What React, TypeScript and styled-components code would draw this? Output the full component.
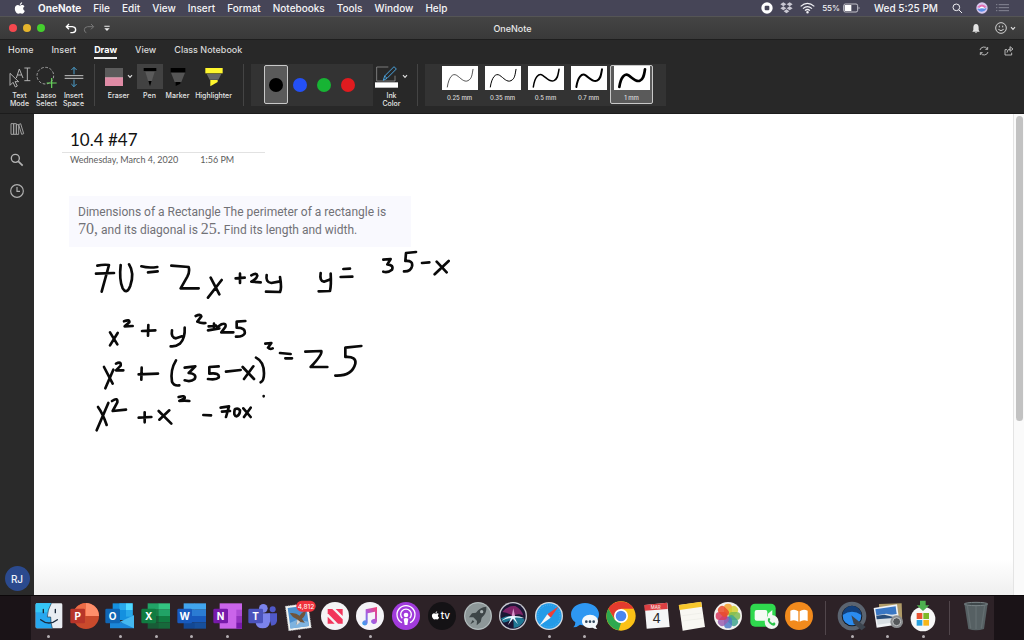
import React from "react";
import styled, { createGlobalStyle, css } from "styled-components";

const Global = createGlobalStyle`
  * { box-sizing: border-box; }
  body { margin: 0; background: #181216; font-family: Inter, "Liberation Sans", sans-serif; }
  button { font: inherit; color: inherit; background: none; border: 0; padding: 0; margin: 0; }
  svg { display: block; flex: none; }
`;

const Screen = styled.div`
  display: flex;
  flex-direction: column;
  min-height: 100vh;
`;

/* ---------- system menu bar ---------- */
const MenuBar = styled.header`
  display: flex;
  align-items: center;
  justify-content: space-between;
  height: 16px;
  padding: 0 15px 0 14px;
  background: #464557;
  color: #f4f4f6;
  font-size: 10px;
  font-weight: 500;
`;
const Menus = styled.nav`
  display: flex;
  align-items: center;
  gap: 12px;
`;
const MenuItem = styled.button<{ $bold?: boolean }>`
  line-height: 16px;
  font-weight: ${(p) => (p.$bold ? 700 : 500)};
`;
const Status = styled.div<{ $gap: number }>`
  display: flex;
  align-items: center;
  gap: ${(p) => p.$gap}px;
`;
const Percent = styled.span`
  font-size: 8px;
`;

/* ---------- window chrome ---------- */
const TitleBar = styled.div`
  display: grid;
  grid-template-columns: 1fr auto 1fr;
  align-items: center;
  height: 24px;
  padding: 0 8px 0 9px;
  background: linear-gradient(#444, #393939);
  border-top: 1px solid #555;
  border-bottom: 1px solid #1e1e1e;
  color: #e8e8e8;
`;
const TitleText = styled.span`
  font-size: 9px;
  font-weight: 500;
`;
const Cluster = styled.div<{ $gap: number; $end?: boolean }>`
  display: flex;
  align-items: center;
  gap: ${(p) => p.$gap}px;
  justify-content: ${(p) => (p.$end ? "flex-end" : "flex-start")};
`;
const Light = styled.button<{ $color: string }>`
  width: 8px;
  height: 8px;
  border-radius: 50%;
  background: ${(p) => p.$color};
`;
const Ribbon = styled.section`
  background: #282828;
  color: #e0e0e0;
  height: 74px;
  border-bottom: 1px solid #1c1c1c;
`;
const TabRow = styled.div`
  display: flex;
  justify-content: space-between;
  align-items: center;
  height: 24px;
  padding: 0 10px 2px 8px;
`;
const Tab = styled.button<{ $active?: boolean }>`
  font-size: 9px;
  line-height: 14px;
  font-weight: ${(p) => (p.$active ? 700 : 500)};
  color: ${(p) => (p.$active ? "#fff" : "#d8d8d8")};
  border-bottom: 2px solid ${(p) => (p.$active ? "#eee" : "transparent")};
`;
const Tools = styled.div`
  display: flex;
  align-items: flex-start;
  padding-left: 6px;
`;
const ToolButton = styled.button<{ $width: number }>`
  display: flex;
  flex-direction: column;
  align-items: center;
  width: ${(p) => p.$width}px;
  font-size: 7px;
  line-height: 8px;
  font-weight: 500;
  color: #e6e6e6;
  text-align: center;
`;
const ToolIcon = styled.span<{ $on?: boolean }>`
  display: flex;
  align-items: center;
  justify-content: center;
  gap: 4px;
  min-width: 26px;
  height: 25px;
  margin-bottom: 3px;
  background: ${(p) => (p.$on ? "#424242" : "transparent")};
`;
const Divider = styled.span`
  width: 1px;
  height: 42px;
  margin: 0 7px;
  background: #444;
`;
const Panel = styled.div`
  display: flex;
  height: 42px;
  padding: 1px 13px;
  background: #333;
`;
const picked = css`
  background: #5a5a5a;
  border-color: #c8c8c8;
`;
const Swatch = styled.button<{ $on?: boolean }>`
  display: flex;
  align-items: center;
  justify-content: center;
  width: 24px;
  height: 39px;
  border: 1px solid transparent;
  border-radius: 2px;
  ${(p) => p.$on && picked}
`;
const Dot = styled.span<{ $color: string }>`
  width: 14px;
  height: 14px;
  border-radius: 50%;
  background: ${(p) => p.$color};
`;
const Width = styled.button<{ $on?: boolean }>`
  display: flex;
  flex-direction: column;
  align-items: center;
  gap: 3px;
  width: 43px;
  height: 39px;
  border: 1px solid transparent;
  border-radius: 2px;
  font-size: 6px;
  line-height: 9px;
  font-weight: 500;
  color: #ddd;
  ${(p) => p.$on && picked}
`;

/* ---------- note ---------- */
const Body = styled.div`
  display: flex;
  flex: 1;
`;
const Rail = styled.aside`
  display: flex;
  flex-direction: column;
  justify-content: space-between;
  align-items: center;
  width: 34px;
  padding: 7px 0 4px;
  background: #2a2a2a;
  color: #b4b4b4;
`;
const RailIcons = styled.div`
  display: flex;
  flex-direction: column;
  gap: 15px;
`;
const Avatar = styled.button`
  width: 25px;
  height: 25px;
  border-radius: 50%;
  background: #2b4a8e;
  color: #eef2fa;
  font-size: 10px;
  font-weight: 500;
`;
const Page = styled.main`
  flex: 1;
  padding: 14px 0 0 28px;
  background: linear-gradient(to top, #efefef 0, #fff 36px);
`;
const Heading = styled.div`
  width: 203px;
  padding-left: 8px;
  border-bottom: 1px solid #e2e2e2;
`;
const Title = styled.h1`
  margin: 0;
  font-family: Lato, sans-serif;
  font-size: 17px;
  line-height: 24px;
  font-weight: 400;
  color: #111;
`;
const Stamp = styled.div`
  display: flex;
  gap: 22px;
  padding: 0 0 0 8px;
  font-family: Lato, sans-serif;
  font-size: 9px;
  line-height: 13px;
  color: #5c5c5c;
`;
const Problem = styled.p`
  width: 342px;
  margin: 30px 0 0 7px;
  padding: 7px 9px 8px;
  background: #f9f9fe;
  font-family: Roboto, sans-serif;
  font-size: 12px;
  line-height: 18px;
  color: #717176;
  white-space: nowrap;
`;
const Num = styled.span`
  font-family: "Liberation Serif", serif;
  font-size: 16px;
  line-height: 16px;
`;
const Ink = styled.svg`
  margin-left: 18px;
  fill: none;
  stroke: #0a0a0a;
  stroke-width: 8;
  stroke-linecap: round;
  stroke-linejoin: round;
`;
const ScrollTrack = styled.div`
  width: 11px;
  padding: 2px 2px 0;
  background: #fafafa;
  border-left: 1px solid #e4e4e4;
`;
const ScrollThumb = styled.div`
  width: 7px;
  height: 305px;
  border-radius: 4px;
  background: #c2c2c2;
`;

/* ---------- dock ---------- */
const DockArea = styled.footer`
  height: 45px;
  padding: 0 30px 0 31px;
  background: #1a1317;
  border-top: 1px solid #0c080a;
`;
const Dock = styled.div`
  display: flex;
  height: 44px;
  background: #2d2227;
`;
const DockItem = styled.button<{ $running?: boolean }>`
  flex: 1;
  min-width: 0;
  display: flex;
  flex-direction: column;
  align-items: center;
  padding-top: 5px;
  &::after {
    content: "";
    width: 3px;
    height: 3px;
    margin-top: 4px;
    border-radius: 50%;
    background: ${(p) => (p.$running ? "#b5afb2" : "transparent")};
  }
`;
const DockRule = styled.span`
  width: 17px;
  display: flex;
  justify-content: center;
  padding: 5px 0;
  &::before {
    content: "";
    width: 1px;
    background: #51464b;
  }
`;

const CaretIcon = () => (
  <svg width="6" height="5" viewBox="0 0 6 5" fill="none" stroke="#ddd" strokeWidth="1.2">
    <path d="M1 1.2 3 3.4 5 1.2" />
  </svg>
);

const appleShape = "M23 1c0 4-3 8-7 8 0-4 3-7 7-8ZM16 11c2 0 4-2 7-2 3 0 5 1 7 4-6 4-5 11 1 14-2 5-5 8-8 8-2 0-4-1-6-1s-4 1-6 1C6 35 1 26 1 20 1 13 5 9 10 9c2 0 4 2 6 2Z";

const AppleMark = () => (
  <svg width="12" height="12" viewBox="0 0 33 36" fill="#fff">
    <path d={appleShape} />
  </svg>
);

const menus = ["File", "Edit", "View", "Insert", "Format", "Notebooks", "Tools", "Window", "Help"];
const tabs = ["Home", "Insert", "Draw", "View", "Class Notebook"];
const colors: [string, string][] = [["Black", "#000"], ["Blue", "#2450f5"], ["Green", "#17b434"], ["Red", "#e01b1f"]];
const widths: [string, number][] = [["0.25 mm", 2], ["0.35 mm", 3], ["0.5 mm", 4.5], ["0.7 mm", 6], ["1 mm", 8]];

/* Lettered square that sits in front of every Office tile */
const Front = ({ letter, color }: { letter: string; color: string }) => (
  <>
    <rect x="1" y="23" width="44" height="44" rx="4" fill={color} />
    <text x="23" y="56" textAnchor="middle" fontSize="30" fontWeight="700" fill="#fff">{letter}</text>
  </>
);

const Office = ({ letter, bands, front }: { letter: string; bands: string[]; front: string }) => (
  <>
    {bands.map((c, i) => (
      <rect key={i} x={i % 2 ? 53 : 20} y={7 + Math.floor(i / 2) * 19} width={i % 2 ? 34 : 34} height="19" fill={c} />
    ))}
    <Front letter={letter} color={front} />
  </>
);

const apps: { name: string; running?: boolean; art: React.ReactNode }[] = [
  { name: "Finder", running: true, art: <>
    <rect x="5" y="7" width="80" height="75" rx="4" fill="#e9edf2" />
    <path d="M9 7H52Q40 28 40 48H50Q50 66 55 82H9Q5 82 5 78V11Q5 7 9 7Z" fill="#27a7ef" />
    <path d="M9 7H52Q44 20 42 34H5V11Q5 7 9 7Z" fill="#35c5f5" />
    <path d="M28 25v10M64 25v10M20 56Q45 76 70 56" fill="none" stroke="#1b2a3c" strokeWidth="4" strokeLinecap="round" />
    <path d="M52 7Q40 28 40 48H50Q50 66 55 82" fill="none" stroke="#1c3950" strokeWidth="2" />
  </> },
  { name: "PowerPoint", art: <>
    <circle cx="48" cy="45" r="39" fill="#c94a2c" />
    <path d="M48 6A39 39 0 0 1 87 45H48Z" fill="#ff8f6b" />
    <path d="M48 6A39 39 0 0 0 9 45H48Z" fill="#ed6c47" />
    <Front letter="P" color="#b7352a" />
  </> },
  { name: "Outlook", running: true, art: <>
    <rect x="23" y="7" width="60" height="50" fill="#1490df" />
    <path d="M43 7H63V27H43Z" fill="#28a8ea" /><path d="M63 7H83V27H63Z" fill="#50d9ff" />
    <path d="M23 27H43V47H23Z" fill="#0364b8" /><path d="M63 27H83V47H63Z" fill="#28a8ea" />
    <path d="M15 45 51 65 87 43V82H15Z" fill="#1b86d8" /><path d="M87 43V82L45 62Z" fill="#45b8f0" />
    <Front letter="O" color="#1066b5" />
  </> },
  { name: "Excel", running: true, art: <Office letter="X" front="#107c41" bands={["#21a366", "#33c481", "#187c45", "#21a366", "#185c37", "#107c41", "#185c37", "#17693b"]} /> },
  { name: "Word", running: true, art: <Office letter="W" front="#185abd" bands={["#41a5ee", "#41a5ee", "#2b7cd3", "#2b7cd3", "#185abd", "#185abd", "#134894", "#174f9c"]} /> },
  { name: "OneNote", running: true, art: <>
    <rect x="20" y="7" width="67" height="76" fill="#ca64ea" />
    <path d="M70 26H87V45H70Z" fill="#ae4bd5" /><path d="M70 45H87V64H70Z" fill="#9332bf" /><path d="M70 64H87V83H70Z" fill="#7719aa" />
    <Front letter="N" color="#7719aa" />
  </> },
  { name: "Teams", art: <>
    <circle cx="46" cy="22" r="13" fill="#7b83eb" /><circle cx="74" cy="25" r="9" fill="#5059c9" />
    <path d="M60 37H87V60Q84 74 70 74Z" fill="#5059c9" />
    <path d="M22 37H66V62Q63 82 44 82T22 62Z" fill="#7b83eb" />
    <Front letter="T" color="#4b53bc" />
  </> },
  { name: "Mail", running: true, art: <>
    <g transform="rotate(-8 43 48)">
      <rect x="9" y="11" width="68" height="74" fill="#f3f3f0" stroke="#bfc5ca" strokeWidth="2" strokeDasharray="4 3" />
      <rect x="15" y="17" width="56" height="62" fill="#4d90cf" />
      <path d="M15 62 40 55 71 66V79H15Z" fill="#7fb3df" />
      <path d="M19 33Q38 33 47 45Q57 35 68 32Q65 49 53 55L60 68 47 64 34 70 39 55Q25 47 19 33Z" fill="#70543a" />
      <path d="M39 55 47 64 34 72Z" fill="#ddd" />
    </g>
    <rect x="37" y="-1" width="58" height="33" rx="16" fill="#f0323c" />
    <text x="66" y="23" textAnchor="middle" fontSize="20" fill="#fff">4,812</text>
  </> },
  { name: "News", art: <>
    <circle cx="45" cy="45" r="42" fill="#f4f3f5" />
    <path d="M23 24H37L68 55V68H54L23 37Z" fill="#f2355b" />
    <path d="M47 24H68V45ZM23 47V68H44Z" fill="#f2355b" />
  </> },
  { name: "Music", running: true, art: <>
    <defs>
      <linearGradient id="musicTone" x1="0" y1="1" x2="1" y2="0">
        <stop offset="0" stopColor="#2da8f0" /><stop offset=".5" stopColor="#a95be0" /><stop offset="1" stopColor="#fb3f6c" />
      </linearGradient>
    </defs>
    <circle cx="45" cy="45" r="42" fill="#f5f4f8" />
    <path d="M32 25 66 18V60Q65 70 55 69Q46 66 49 58Q52 53 60 53V32L38 37V66Q36 75 27 73Q19 69 23 62Q26 58 32 58Z" fill="url(#musicTone)" />
  </> },
  { name: "Podcasts", art: <>
    <circle cx="45" cy="45" r="42" fill="#a13bdc" />
    <g fill="none" stroke="#fff" strokeWidth="4"><path d="M33 65A27 27 0 1 1 57 65M34 52A16 16 0 1 1 56 52" /></g>
    <circle cx="45" cy="42" r="7" fill="#fff" /><path d="M38 53Q45 49 52 53L49 72H41Z" fill="#fff" />
  </> },
  { name: "TV", art: <>
    <circle cx="45" cy="45" r="42" fill="#141215" />
    <g transform="translate(14 30) scale(.72)" fill="#fff"><path d={appleShape} /></g>
    <text x="55" y="54" textAnchor="middle" fontSize="30" fontWeight="500" fill="#fff">tv</text>
  </> },
  { name: "Launchpad", art: <>
    <circle cx="45" cy="45" r="42" fill="#8d9798" /><circle cx="45" cy="45" r="40" fill="none" stroke="#b7bfc0" strokeWidth="3" />
    <path d="M70 17Q51 18 39 35L27 37 18 49 31 49 42 60 41 73 53 63 56 50Q72 37 70 17Z" fill="#3d4547" />
    <circle cx="56" cy="32" r="5" fill="#a8b1b2" /><path d="M29 57 34 62 22 70Z" fill="#3d4547" />
  </> },
  { name: "Siri", art: <>
    <circle cx="45" cy="45" r="42" fill="#c9cbd3" /><circle cx="45" cy="45" r="38" fill="#1b1734" />
    <path d="M13 33Q30 12 52 15Q72 26 76 44Q61 35 45 45Q30 34 13 33Z" fill="#7d2468" />
    <path d="M9 52Q30 42 45 46Q65 44 80 56Q70 78 47 81Q47 63 45 50Q30 66 15 64Z" fill="#1f7894" />
    <path d="M9 60Q30 43 45 45Q64 44 80 52Q60 49 50 50L60 70 45 53 30 72 39 51Q25 52 9 60Z" fill="#eaf6ff" />
    <path d="M41 45 46 22 51 45Z" fill="#d796c9" />
  </> },
  { name: "Safari", running: true, art: <>
    <circle cx="45" cy="45" r="42" fill="#d6dce2" /><circle cx="45" cy="45" r="38" fill="#249be8" />
    <circle cx="45" cy="45" r="33" fill="none" stroke="#8fd0f6" strokeWidth="3" strokeDasharray="1 5" />
    <path d="M74 16 50 50 40 40Z" fill="#ef3f38" /><path d="M16 74 40 40 50 50Z" fill="#f5f6f8" />
  </> },
  { name: "Messages", running: true, art: <>
    <path d="M45 6C69 6 87 21 87 40S69 73 45 73Q37 73 30 71Q21 79 10 79Q17 72 16 64Q3 55 3 40C3 21 21 6 45 6Z" fill="#2e97f2" />
    <path d="M60 41C75 41 84 50 84 61Q84 70 77 76Q78 81 82 84Q73 84 68 80L58 81C44 80 36 71 36 61S46 41 60 41Z" fill="#f4f8fc" />
    <g fill="#31475d"><circle cx="49" cy="62" r="4" /><circle cx="60" cy="62" r="4" /><circle cx="71" cy="62" r="4" /></g>
  </> },
  { name: "Chrome", art: <>
    <circle cx="45" cy="45" r="44" fill="#fbc116" />
    <path d="M7 23A44 44 0 0 1 83 23H45L26 55Z" fill="#e33b2e" />
    <path d="M7 23 26 56 45 66 38 88A44 44 0 0 1 7 23Z" fill="#2da94f" />
    <circle cx="45" cy="45" r="21" fill="#fff" /><circle cx="45" cy="45" r="16" fill="#4a86f0" />
  </> },
  { name: "Calendar", art: <>
    <path d="M11 12 79 5 86 78 17 83Z" fill="#f5f5f6" />
    <path d="M10 12 78 5 80 24 11 29Z" fill="#dc3f42" />
    <text x="44" y="24" textAnchor="middle" fontSize="13" fill="#fff">MAR</text>
    <text x="47" y="66" textAnchor="middle" fontSize="40" fill="#29292b">4</text>
  </> },
  { name: "Notes", art: <>
    <path d="M6 12 73 3 84 78 17 89Z" fill="#f8f7f2" /><path d="M5 12 72 2 75 17 8 27Z" fill="#f7c72c" />
    <path d="M16 44 75 36M18 60 77 52" stroke="#ecebe5" strokeWidth="2" />
  </> },
  { name: "Photos", art: <>
    <circle cx="45" cy="45" r="42" fill="#f3f2f0" />
    {["#f5a12b", "#d3d132", "#7dbb52", "#3fa48f", "#4d7ac6", "#9a5fb0", "#d9395f", "#ea4c2c"].map((c, i) => (
      <rect key={c} x="33" y="8" width="24" height="35" rx="11" fill={c} opacity=".85" transform={`rotate(${i * 45} 45 45)`} />
    ))}
  </> },
  { name: "FaceTime", art: <>
    <rect x="4" y="8" width="76" height="69" rx="14" fill="#2fd94e" />
    <rect x="17" y="27" width="38" height="32" rx="6" fill="#f4fbf4" /><path d="M57 38 70 27V57L57 48Z" fill="#f4fbf4" />
    <circle cx="68" cy="63" r="21" fill="#f2f6f2" />
    <path d="M57 53Q60 49 64 54L62 60 70 67 76 64Q82 68 78 73Q70 77 61 67Q54 59 57 53Z" fill="#2bc44b" />
  </> },
  { name: "Books", art: <>
    <circle cx="45" cy="45" r="42" fill="#f28a1c" />
    <path d="M43 31Q32 22 19 29V60Q32 54 43 62ZM47 31Q58 22 71 29V60Q58 54 47 62Z" fill="#fff" />
  </> },
];
const recent: typeof apps = [
  { name: "QuickTime", running: true, art: <>
    <circle cx="45" cy="45" r="43" fill="#5b6470" /><circle cx="45" cy="45" r="31" fill="#14181f" />
    <circle cx="45" cy="45" r="28" fill="#2b8cf0" /><path d="M17 42A28 28 0 0 1 73 42Q45 22 17 42Z" fill="#12407c" />
    <path d="M43 43 86 78 74 88 50 68Z" fill="#3d454f" />
  </> },
  { name: "Preview", running: true, art: <>
    <path d="M18 9 86 7 88 68 20 74Z" fill="#b09b68" />
    <path d="M2 21 72 10 80 70 11 80Z" fill="#f1f3f6" /><path d="M7 25 68 16 71 39 11 49Z" fill="#3a77c4" /><path d="M10 43 40 38 72 44 74 62 14 71Z" fill="#d9dfe4" />
    <path d="M10 44 34 41 71 50 11 55Z" fill="#294d7a" />
    <circle cx="71" cy="62" r="19" fill="#8b8e91" /><circle cx="71" cy="62" r="12" fill="#55585b" stroke="#c4c6c8" strokeWidth="3" />
  </> },
  { name: "Microsoft AutoUpdate", running: true, art: <>
    <circle cx="45" cy="54" r="37" fill="#f7f7f7" />
    <path d="M26 36H43V54H26Z" fill="#e8522f" /><path d="M46 36H63V54H46Z" fill="#7cb928" /><path d="M26 57H43V74H26Z" fill="#27a1e0" /><path d="M46 57H63V74H46Z" fill="#f7b618" />
    <path d="M36 -1H53V13H64L45 30 26 13H36Z" fill="#4db04f" />
  </> },
];

const DockIcon = ({ app }: { app: (typeof apps)[number] }) => (
  <DockItem $running={app.running} aria-label={app.name}>
    <svg width="30" height="30" viewBox="0 0 90 90" overflow="visible">{app.art}</svg>
  </DockItem>
);

export default function App() {
  return (
    <Screen>
      <Global />
      <MenuBar>
        <Menus>
          <AppleMark />
          <MenuItem $bold>OneNote</MenuItem>
          {menus.map((m) => <MenuItem key={m}>{m}</MenuItem>)}
        </Menus>
        <Status $gap={14}>
          <Status $gap={7}>
            <svg width="12" height="12" viewBox="0 0 36 36"><circle cx="18" cy="18" r="17" fill="#fff" /><rect x="11" y="11" width="14" height="14" rx="3" fill="#464557" /></svg>
            <svg width="13" height="12" viewBox="0 0 39 36" fill="#c9c8d2">
              <path d="M10 1 19 7 10 13 1 7ZM29 1 38 7 29 13 20 7ZM10 13 19 19 10 25 1 19ZM29 13 38 19 29 25 20 19ZM19.500 22 28 28 19.500 34 11 28Z" />
            </svg>
            <svg width="15" height="12" viewBox="0 0 45 36" fill="none" stroke="#f0f0f4" strokeWidth="3.600">
              <path d="M2 13Q22 -5 43 13M9 20Q22 8 36 20M15 26Q22 19 30 26" /><circle cx="22.500" cy="31" r="2" fill="#fff" />
            </svg>
            <Status $gap={3}>
              <Percent>55%</Percent>
              <svg width="17" height="10" viewBox="0 0 51 30"><rect x="2" y="3" width="42" height="24" rx="5" fill="none" stroke="#dcdce2" strokeWidth="2.500" /><rect x="5" y="6" width="20" height="18" fill="#fff" /><path d="M47 11V19L50 15Z" fill="#dcdce2" /></svg>
            </Status>
          </Status>
          <span>Wed 5:25 PM</span>
          <Status $gap={13}>
            <svg width="11" height="11" viewBox="0 0 33 33" fill="none" stroke="#f0f0f4" strokeWidth="3"><circle cx="13" cy="13" r="10" /><path d="M20 20 30 30" /></svg>
            <Status $gap={8}>
              <svg width="12" height="12" viewBox="0 0 36 36"><circle cx="18" cy="18" r="17" fill="#d8c8ef" /><path d="M4 15Q18 0 32 15L18 20Z" fill="#e66fb4" /><path d="M4 22Q18 38 32 20L18 15Z" fill="#5e8fe8" /><path d="M7 22Q18 5 28 22Q18 16 7 22Z" fill="#fff" /></svg>
              <svg width="13" height="10" viewBox="0 0 39 30" stroke="#9391a0" strokeWidth="2.500"><path d="M0 5H4M8 5H39M0 14H4M8 14H39M0 23H4M8 23H39" /></svg>
            </Status>
          </Status>
        </Status>
      </MenuBar>

      <TitleBar>
        <Cluster $gap={20}>
          <Cluster $gap={6}>
            <Light $color="#f5484e" aria-label="Close" />
            <Light $color="#e6b52c" aria-label="Minimize" />
            <Light $color="#45cf2e" aria-label="Zoom" />
          </Cluster>
          <Cluster $gap={6}>
            <svg width="12" height="11" viewBox="0 0 36 33" fill="none" stroke="#fff" strokeWidth="4"><path d="M12 3 4 11 12 19M4 11H22Q32 12 32 20T23 29H16" /></svg>
            <svg width="12" height="11" viewBox="0 0 36 33" fill="none" stroke="#777" strokeWidth="3"><path d="M24 3 32 11 24 19M32 11H14Q4 12 4 20T10 29" /></svg>
            <svg width="12" height="10" viewBox="0 0 36 30" fill="#eee"><path d="M10 8H26V11H10ZM10 16H26L18 24Z" /></svg>
          </Cluster>
        </Cluster>
        <TitleText>OneNote</TitleText>
        <Cluster $gap={14} $end>
          <svg width="10" height="11" viewBox="0 0 30 33" fill="#e2e2e2"><path d="M15 3Q23 4 23 14V21L26 26H4L7 21V14Q7 4 15 3ZM11 28H19Q15 33 11 28Z" /></svg>
          <Cluster $gap={3}>
            <svg width="12" height="12" viewBox="0 0 36 36" fill="none" stroke="#ddd" strokeWidth="2.800"><circle cx="18" cy="18" r="16" /><path d="M13 11V16M23 11V16M10 22Q18 30 26 22" /></svg>
            <CaretIcon />
          </Cluster>
        </Cluster>
      </TitleBar>

      <Ribbon>
        <TabRow>
          <Cluster $gap={18}>{tabs.map((t) => <Tab key={t} $active={t === "Draw"}>{t}</Tab>)}</Cluster>
          <Cluster $gap={15}>
            <svg width="10" height="10" viewBox="0 0 30 30" fill="none" stroke="#ccc" strokeWidth="2.600"><path d="M3 12A12 12 0 0 1 25 9M27 18A12 12 0 0 1 5 21M26 3V10H19M4 27V20H11" /></svg>
            <svg width="10" height="10" viewBox="0 0 30 30" fill="none" stroke="#ccc" strokeWidth="2.600"><path d="M9 11H3V27H23V20M9 20Q9 9 20 9M18 2 27 9 18 16Z" /></svg>
          </Cluster>
        </TabRow>
        <Tools>
          <ToolButton $width={27}>
            <ToolIcon>
              <svg width="22" height="22" viewBox="0 0 66 66" fill="none" stroke="#b9b9b9" strokeWidth="2.800"><path d="M3 22V58L12 49 19 63 25 60 18 47H29ZM22 36 31 9 42 36M25 27H38M46 6H64M55 6V44M46 44H64" /></svg>
            </ToolIcon>
            Text<br />Mode
          </ToolButton>
          <ToolButton $width={27}>
            <ToolIcon>
              <svg width="22" height="22" viewBox="0 0 66 66" fill="none"><circle cx="28" cy="29" r="25" stroke="#aaa" strokeWidth="2.800" strokeDasharray="8 5" /><path d="M47 36V66M32 51H62" stroke="#69d85d" strokeWidth="3.500" /></svg>
            </ToolIcon>
            Lasso<br />Select
          </ToolButton>
          <ToolButton $width={27}>
            <ToolIcon>
              <svg width="20" height="22" viewBox="0 0 60 66" fill="none"><path d="M2 29H58M2 37H58" stroke="#c4c4c4" strokeWidth="3" /><path d="M30 25V4M22 12 30 4 38 12M30 41V62M22 54 30 62 38 54" stroke="#4a9cc9" strokeWidth="3" /></svg>
            </ToolIcon>
            Insert<br />Space
          </ToolButton>
          <Divider />
          <ToolButton $width={33}>
            <ToolIcon>
              <svg width="18" height="20" viewBox="0 0 54 60"><rect y="3" width="54" height="29" fill="#5b5b5b" /><rect y="32" width="54" height="25" fill="#df8ba5" /><path d="M0 32H54" stroke="#f2b8c8" strokeWidth="2" /></svg>
              <CaretIcon />
            </ToolIcon>
            Eraser
          </ToolButton>
          <ToolButton $width={29}>
            <ToolIcon $on><svg width="14" height="20" viewBox="0 0 42 60"><rect x="2" y="3" width="38" height="9" /><path d="M7 14H35L25 47H17Z" fill="#5b5b5b" /><path d="M16 42H26L21 58Z" /></svg></ToolIcon>
            Pen
          </ToolButton>
          <ToolButton $width={27}>
            <ToolIcon><svg width="16" height="20" viewBox="0 0 48 60"><rect x="2" y="3" width="44" height="13" /><path d="M3 17H45L34 45H14Z" fill="#555" /><path d="M17 45H31V50L17 57Z" /></svg></ToolIcon>
            Marker
          </ToolButton>
          <ToolButton $width={45}>
            <ToolIcon><svg width="18" height="20" viewBox="0 0 54 60"><rect x="1" y="3" width="52" height="16" fill="#fff62e" /><path d="M5 21H49L40 38H14Z" fill="#666" /><path d="M16 39H38V45L16 58Z" fill="#fff62e" /></svg></ToolIcon>
            Highlighter
          </ToolButton>
          <Divider />
          <Panel>
            {colors.map(([n, c], i) => <Swatch key={n} $on={i === 0} aria-label={n}><Dot $color={c} /></Swatch>)}
          </Panel>
          <ToolButton $width={37}>
            <ToolIcon>
              <svg width="23" height="23" viewBox="0 0 69 69" fill="none"><path d="M40 6H5V48H60V32" stroke="#8b8b8b" strokeWidth="2.500" /><path d="M25 46 29 33 57 5 64 12 36 40ZM29 33 36 40" stroke="#4aa3de" strokeWidth="3" /><rect y="52" width="69" height="16" fill="#fff" /></svg>
              <CaretIcon />
            </ToolIcon>
            Ink<br />Color
          </ToolButton>
          <Divider />
          <Panel>
            {widths.map(([n, w], i) => (
              <Width key={n} $on={i === 4}>
                <svg width="36" height="24" viewBox="0 0 108 72"><rect width="108" height="72" fill="#fff" /><path d="M16 63C20 34 32 20 44 28S66 50 78 44S90 26 93 10" fill="none" stroke="#000" strokeWidth={w} strokeLinecap="round" /></svg>
                {n}
              </Width>
            ))}
          </Panel>
        </Tools>
      </Ribbon>

      <Body>
        <Rail>
          <RailIcons>
            <svg width="16" height="16" viewBox="0 0 48 48" fill="none" stroke="#a8a8a8" strokeWidth="2.800"><path d="M6 8H14V40H6ZM14 8H22V40H14ZM22 11H29V40H22ZM29 11 35 8 44 38 38 40Z" /></svg>
            <svg width="16" height="16" viewBox="0 0 48 48" fill="none" stroke="#b4b4b4" strokeWidth="4"><circle cx="19" cy="19" r="12" /><path d="M28 28 41 41" strokeWidth="5" /></svg>
            <svg width="16" height="16" viewBox="0 0 48 48" fill="none" stroke="#b0b0b0" strokeWidth="3.500"><circle cx="24" cy="24" r="19" /><path d="M24 12V25H33" /></svg>
          </RailIcons>
          <Avatar>RJ</Avatar>
        </Rail>
        <Page>
          <Heading><Title>10.4 #47</Title></Heading>
          <Stamp><span>Wednesday, March 4, 2020</span><span>1:56 PM</span></Stamp>
          <Problem>
            Dimensions of a Rectangle The perimeter of a rectangle is<br />
            <Num>70,</Num> and its diagonal is <Num>25.</Num> Find its length and width.
          </Problem>
          <Ink width="400" height="190" viewBox="0 6 1200 570">
            <path d="M52 62Q70 58 87 60L65 140M48 86 102 84M122 60Q117 105 128 130Q140 150 151 122Q164 84 147 58M184 64Q205 70 232 66M204 82 233 79" />
            <path d="M274 62 326 66Q330 80 322 95L302 130 356 130M392 98 418 148M425 105 384 158M467 100 494 98M480 86V114M514 91Q530 82 532 92Q530 102 514 110L542 112" />
            <path d="M90 262 112 298M113 264 90 301M132 229Q150 222 148 232L134 244 158 243M186 258 226 256M205 240 204 272M276 256Q272 278 288 280L306 274M314 248Q316 280 300 296Q286 306 272 304" />
            <path d="M347 213Q362 206 364 214L352 230Q364 236 376 234M386 244 408 242M384 256 418 250M402 236V248M412 246 424 238Q440 232 436 246L424 262 460 262M496 228 470 230 470 248Q498 248 494 266Q488 276 468 275M556 296 574 294 564 308Q570 314 578 310" />
            <path d="M72 366 98 416M100 374 76 430M108 356Q124 348 122 362L108 376 130 376M176 388 234 386M185 368 184 404M288 346Q270 375 276 410Q282 424 298 421M314 368 346 364 326 384Q352 386 344 402Q332 412 314 406" />
            <path d="M416 364 388 366 388 386Q420 382 416 398Q408 406 384 402M438 380 482 375M488 366 522 402M520 364 492 402M528 338Q552 350 552 385Q552 408 542 412" />
            <path d="M54 486Q68 505 80 540M85 474 50 556M96 468Q114 456 112 472L98 498 138 494M176 518 214 516M194 502V532M236 498 274 536M268 496 238 524M296 456Q316 450 314 460L298 468Q314 466 328 468" />
            <path d="M370 510 393 511M422 488 447 484 438 516M426 500 450 498M464 494Q460 514 470 514Q480 510 480 496Q474 488 466 492M490 490 512 516M512 488 492 516M551 453V454" />
            <g transform="translate(540 -180)">
              <path d="M20 270Q16 292 34 294L56 290M60 276Q66 310 60 321L18 320M182 264Q178 288 192 290L208 284M212 266Q214 300 210 318L176 319M250 252 270 251M242 276 277 275" />
              <path d="M370 224 392 222 382 238Q402 240 396 254Q384 264 370 260M468 201 438 204 436 228Q460 226 456 244Q452 260 432 259M486 234 508 232M530 230 560 262M566 228 524 268" />
              <path d="M60 504 92 507M76 520H96M136 500 184 498Q188 508 152 546L202 546M304 483 256 488 256 516Q290 514 286 536Q276 574 226 572" />
            </g>
          </Ink>
        </Page>
        <ScrollTrack><ScrollThumb /></ScrollTrack>
      </Body>

      <DockArea>
        <Dock>
          {apps.map((a) => <DockIcon key={a.name} app={a} />)}
          <DockRule />
          {recent.map((a) => <DockIcon key={a.name} app={a} />)}
          <DockRule />
          <DockItem aria-label="Trash">
            <svg width="30" height="30" viewBox="0 0 90 90"><path d="M10 8H80L69 84Q45 92 22 84Z" fill="#566063" /><path d="M19 14 29 82M45 14V84M71 14 61 82" stroke="#646e71" strokeWidth="4" /><ellipse cx="45" cy="9" rx="35" ry="5" fill="#3f484b" stroke="#7b8588" strokeWidth="3" /></svg>
          </DockItem>
        </Dock>
      </DockArea>
    </Screen>
  );
}
